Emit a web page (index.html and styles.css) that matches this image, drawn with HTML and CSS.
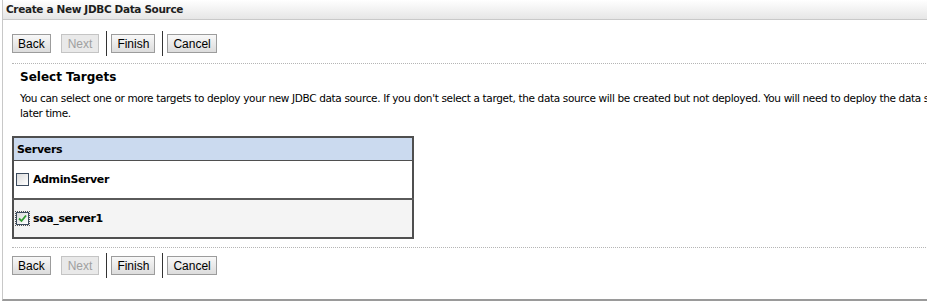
FILE: index.html
```html
<!DOCTYPE html>
<html lang="en">
<head>
    <meta charset="UTF-8">
    <title>Create a New JDBC Data Source</title>
    <link rel="stylesheet" href="styles.css">
</head>
<body>
    <div class="panel">
        <div class="panel-header">Create a New JDBC Data Source</div>

        <!-- Top train buttons -->
        <div class="toolbar">
            <button class="btn">Back</button>
            <button class="btn" disabled>Next</button>
            <span class="sep"></span>
            <button class="btn">Finish</button>
            <span class="sep"></span>
            <button class="btn">Cancel</button>
        </div>

        <div class="content">
            <h3>Select Targets</h3>
            <p class="intro">You can select one or more targets to deploy your new JDBC data source. If you don't select a target, the data source will be created but not deployed. You will need to deploy the data source at a later time.</p>
        </div>

        <table class="targets">
            <tr class="head"><th>Servers</th></tr>
            <tr class="row">
                <td><label><span class="cb"></span>AdminServer</label></td>
            </tr>
            <tr class="row alt">
                <td><label><span class="cb focus"><svg width="9" height="9" viewBox="0 0 9 9"><path d="M1 4.5 L3.5 7 L8 1.5" fill="none" stroke="#2e9a2e" stroke-width="1.8"/></svg></span>soa_server1</label></td>
            </tr>
        </table>

        <!-- Bottom train buttons -->
        <div class="toolbar bottom">
            <button class="btn">Back</button>
            <button class="btn" disabled>Next</button>
            <span class="sep"></span>
            <button class="btn">Finish</button>
            <span class="sep"></span>
            <button class="btn">Cancel</button>
        </div>
    </div>
</body>
</html>
```

FILE: styles.css
```css
html, body {
    margin: 0;
    padding: 0;
    background: #fff;
    overflow: hidden;
}
body {
    font-family: "DejaVu Sans", Tahoma, sans-serif;
    font-size: 11px;
    color: #000;
}
.panel {
    margin-left: 2px;
    width: 924px;
    height: 299px;
    border-left: 1px solid #c8c8c8;
    border-right: 1px solid #d8d8d8;
    border-bottom: 2px solid #9a9a9a;
}
.panel-header {
    height: 19px;
    line-height: 19px;
    padding-left: 3px;
    font-weight: bold;
    font-size: 10.5px;
    letter-spacing: -0.35px;
    color: #1e1e1e;
    background: linear-gradient(#ffffff, #e6e6e6);
    border-bottom: 1px solid #c9c9c9;
}
.toolbar {
    display: flex;
    align-items: center;
    margin: 11px 0 0 9px;
    padding-bottom: 7px;
    border-bottom: 1px dotted #b5b5b5;
    width: 1000px;
}
.toolbar.bottom {
    border-bottom: none;
    border-top: 1px dotted #b5b5b5;
    padding-top: 5px;
    margin-top: 8px;
}
.btn {
    height: 19px;
    padding: 0 5px;
    margin-right: 10px;
    font-family: "Liberation Sans", Arial, sans-serif;
    font-size: 12px;
    color: #000;
    background: linear-gradient(#f8f8f8, #dcdcdc);
    border: 1px solid #9c9c9c;
    border-radius: 0;
}
.btn:disabled {
    padding: 0 6px;
    color: #a0a0a0;
    background: #e9e9e9;
    border-color: #c4c4c4;
}
.sep {
    width: 1px;
    height: 25px;
    background: #333;
    margin: 0 4px 0 -3px;
}
.content {
    padding-left: 17px;
}
h3 {
    margin: 6px 0 0 0;
    font-size: 12px;
}
.intro {
    width: 960px;
    margin: 7px 0 0 0;
    font-size: 10.5px;
    line-height: 15px;
    letter-spacing: -0.35px;
}
.targets {
    margin: 15px 0 0 9px;
    width: 402px;
    border-collapse: collapse;
    border: 2px solid #4f4f4f;
}
.targets th {
    text-align: left;
    height: 22px;
    padding: 0 0 0 3px;
    font-size: 11px;
    letter-spacing: -0.3px;
    background: #cbdaef;
    border-bottom: 1px solid #4f4f4f;
}
.targets td {
    height: 37px;
    padding: 0 0 0 2px;
    font-weight: bold;
    letter-spacing: -0.4px;
    border-bottom: 2px solid #5a5a5a;
}
.targets .alt td {
    background: #f4f4f4;
    border-bottom: none;
}
label {
    display: flex;
    align-items: center;
}
.cb {
    display: inline-flex;
    align-items: center;
    justify-content: center;
    width: 11px;
    height: 11px;
    margin-right: 4px;
    border: 1px solid #3c4b5e;
    background: linear-gradient(135deg, #dcdcdc, #ffffff);
}
.cb.focus {
    outline: 1px dotted #555;
    outline-offset: 0;
}
```
